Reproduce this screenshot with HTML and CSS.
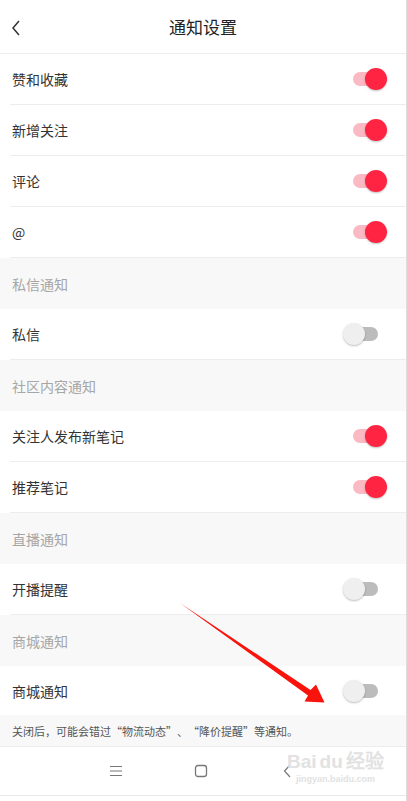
FILE: index.html
```html
<!DOCTYPE html>
<html lang="zh-CN">
<head>
  <meta charset="UTF-8" />
  <meta name="viewport" content="width=device-width, initial-scale=1" />
  <title>通知设置</title>
  <link rel="stylesheet" href="styles.css">
</head>
<body>
  <main class="page">
    <header class="topbar">
      <svg class="back" width="10" height="16" viewBox="0 0 10 16"><path d="M8 1 L2 8 L8 15" fill="none" stroke="#333" stroke-width="1.5"/></svg>
      <h1>通知设置</h1>
    </header>

    <div class="row"><span>赞和收藏</span><span class="switch on"><i></i><b></b></span></div>
    <div class="row"><span>新增关注</span><span class="switch on"><i></i><b></b></span></div>
    <div class="row"><span>评论</span><span class="switch on"><i></i><b></b></span></div>
    <div class="row"><span>@</span><span class="switch on"><i></i><b></b></span></div>

    <div class="section">私信通知</div>
    <div class="row"><span>私信</span><span class="switch"><i></i><b></b></span></div>

    <div class="section">社区内容通知</div>
    <div class="row"><span>关注人发布新笔记</span><span class="switch on"><i></i><b></b></span></div>
    <div class="row"><span>推荐笔记</span><span class="switch on"><i></i><b></b></span></div>

    <div class="section">直播通知</div>
    <div class="row"><span>开播提醒</span><span class="switch"><i></i><b></b></span></div>

    <div class="section">商城通知</div>
    <div class="row last"><span>商城通知</span><span class="switch"><i></i><b></b></span></div>

    <p class="note">关闭后<span class="qc">，</span>可能会错过<span class="qo">“</span>物流动态<span class="qc">”</span><span class="qc">、</span><span class="qo">“</span>降价提醒<span class="qc">”</span>等通知<span class="qc">。</span></p>

    <nav class="navbar">
      <svg width="14" height="12" viewBox="0 0 14 12"><path d="M1 1.5 H13 M1 6 H13 M1 10.5 H13" stroke="#777" stroke-width="1.2"/></svg>
      <svg width="14" height="14" viewBox="0 0 14 14"><rect x="1.5" y="1.5" width="11" height="11" rx="2.5" fill="none" stroke="#777" stroke-width="1.3"/></svg>
      <svg width="8" height="14" viewBox="0 0 8 14"><path d="M7 1 L1.5 7 L7 13" fill="none" stroke="#777" stroke-width="1.2"/></svg>
    </nav>

    <div class="watermark">
      <span class="wm-big">Bai<em>du</em>经验</span>
      <span class="wm-small">jingyan.baidu.com</span>
    </div>

    <svg class="arrow" width="407" height="801" viewBox="0 0 407 801">
      <polygon points="180,603 310.5,690 316,684.5 324.5,702.5 304.5,701.5 308,695.5" fill="#f8130d"/>
    </svg>
  </main>
</body>
</html>
```

FILE: styles.css
```css
:root {
  --color-red: #ff2442;
  --color-red-light: #fbb9c4;
  --color-line: #ededed;
  --color-section: #f8f8f8;
}

body {
  margin: 0;
  font-family: "Noto Sans CJK SC", "Noto Sans", sans-serif;
  background: #fff;
}

.page {
  position: relative;
  width: 406px;
  height: 801px;
  border-right: 1px solid #dedede;
  overflow: hidden;
}

.topbar {
  height: 53px;
  border-bottom: 1px solid var(--color-line);
  display: flex;
  align-items: center;
  justify-content: center;
  position: relative;
}

.topbar h1 {
  margin: 0;
  font-size: 17px;
  font-weight: 400;
  color: #222;
}

.back {
  position: absolute;
  left: 11px;
  top: 20px;
}

.row {
  height: 50px;
  margin-left: 10px;
  padding: 0 19px 0 2px;
  border-bottom: 1px solid var(--color-line);
  display: flex;
  align-items: center;
  justify-content: space-between;
  font-size: 14px;
  color: #333;
}

.row.last {
  height: 49px;
  border-bottom: none;
}

.section {
  height: 51px;
  background: var(--color-section);
  padding-left: 12px;
  display: flex;
  align-items: center;
  font-size: 14px;
  color: #a6a6a6;
}

.switch {
  position: relative;
  width: 44px;
  height: 22px;
}

.switch i {
  position: absolute;
  top: 4px;
  left: 2px;
  width: 33px;
  height: 14px;
  border-radius: 7px;
  background: #bcbcbc;
}

.switch b {
  position: absolute;
  top: 0;
  left: 0;
  width: 22px;
  height: 22px;
  border-radius: 50%;
  background: #efefef;
  box-shadow: 0 1px 2px rgba(0, 0, 0, 0.25);
}

.switch.on i {
  left: 10px;
  width: 32px;
  background: var(--color-red-light);
}

.switch.on b {
  left: 22px;
  background: var(--color-red);
}

.note {
  margin: 0;
  height: 31px;
  border-bottom: 1px solid var(--color-line);
  background: var(--color-section);
  padding-left: 12px;
  display: flex;
  align-items: center;
  font-size: 11px;
  color: #555;
  white-space: pre;
}

.qo,
.qc {
  display: inline-block;
  width: 1em;
}

.qo {
  text-align: right;
}

.qc {
  text-align: left;
}

.navbar {
  height: 48px;
  border-bottom: 1px solid #e8e8e8;
  display: flex;
  align-items: center;
  padding-left: 109px;
  gap: 71px;
}

.navbar svg:last-child {
  margin-left: 4px;
}

.watermark {
  position: absolute;
  left: 287px;
  top: 752px;
  display: flex;
  flex-direction: column;
  align-items: center;
  color: #e2e2e2;
  font-family: "Liberation Sans", sans-serif;
  line-height: 1;
}

.wm-big {
  font-size: 19px;
  font-weight: 700;
}

.wm-big em {
  font-style: normal;
  margin: 0 3px;
}

.wm-small {
  margin-top: 4px;
  font-size: 9px;
  font-weight: 700;
}

.arrow {
  position: absolute;
  left: 0;
  top: 0;
  pointer-events: none;
}
```
